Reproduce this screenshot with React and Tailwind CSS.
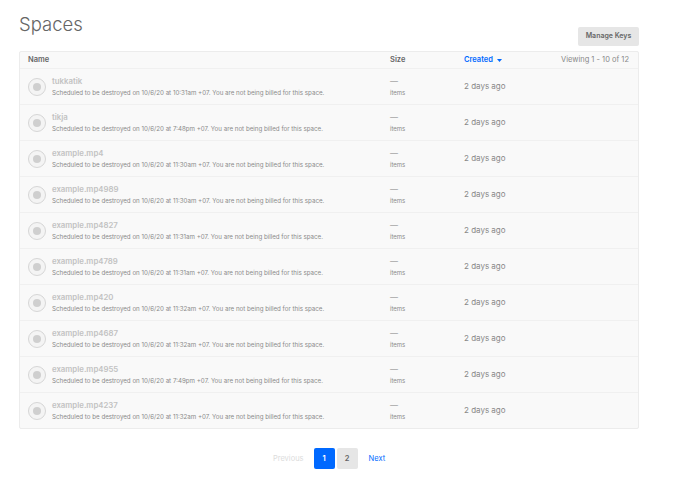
const rows = [
  { name: 'tukkatik', time: '10:31am' },
  { name: 'tikja', time: '7:48pm' },
  { name: 'example.mp4', time: '11:30am' },
  { name: 'example.mp4989', time: '11:30am' },
  { name: 'example.mp4827', time: '11:31am' },
  { name: 'example.mp4789', time: '11:31am' },
  { name: 'example.mp420', time: '11:32am' },
  { name: 'example.mp4687', time: '11:32am' },
  { name: 'example.mp4955', time: '7:49pm' },
  { name: 'example.mp4237', time: '11:32am' },
]

export default function App() {
  return (
    <div className="w-[696px] h-[489px] overflow-hidden bg-white font-['Inter',sans-serif] pl-[19px] pt-[13px]">
      {/* Header */}
      <div className="w-[620px] h-[38px] flex justify-between">
        <h1 className="text-[18.5px] leading-[22px] font-light text-[#666]">Spaces</h1>
        <button className="self-end mb-[5px] w-[61px] h-[19px] bg-[#e6e6e6] rounded-[2px] text-[7px] font-semibold text-[#666]">Manage Keys</button>
      </div>

      {/* Table */}
      <div className="w-[620px] bg-[#f9f9f9] border border-[#ececec] rounded-[2px]">
        <div className="h-[17px] flex items-center pl-[8px] pr-[9px] border-b border-[#f0f0f0] text-[7.5px]">
          <span className="w-[362px] font-semibold text-[#666]">Name</span>
          <span className="w-[74px] font-semibold text-[#666]">Size</span>
          <span className="w-[60px] font-semibold text-[#0069ff] flex items-center gap-[4px]">
            Created
            <svg width="5" height="3" viewBox="0 0 5 3"><path d="M0 0h5L2.5 3z" fill="#0069ff" /></svg>
          </span>
          <span className="flex-1 text-right text-[#888]">Viewing 1 - 10 of 12</span>
        </div>
        {rows.map((row, i) => (
          <div key={row.name} className={`flex items-center pl-[8px] ${i < rows.length - 1 ? 'h-[36px] border-b border-[#f0f0f0]' : 'h-[35px]'}`}>
            <div className="w-[18px] h-[18px] rounded-full border border-[#d6d6d6] bg-[#f4f4f4] flex items-center justify-center">
              <div className="w-[8px] h-[8px] rounded-full bg-[#cfcfcf]" />
            </div>
            <div className="w-[338px] ml-[6px]">
              <div className="text-[7.8px] leading-[11px] font-semibold text-[#c2c2c2]">{row.name}</div>
              <div className="text-[6.2px] leading-[10px] mt-[1px] text-[#8a8a8a]">
                Scheduled to be destroyed on 10/6/20 at {row.time} +07. You are not being billed for this space.
              </div>
            </div>
            <div className="w-[74px]">
              <div className="text-[8px] leading-[11px] text-[#999]">—</div>
              <div className="text-[6px] leading-[10px] mt-[1px] text-[#8a8a8a]">items</div>
            </div>
            <div className="text-[8px] text-[#888] mb-[2px]">2 days ago</div>
          </div>
        ))}
      </div>

      {/* Pagination */}
      <div className="w-[620px] mt-[19px] flex items-center justify-center text-[7.5px]">
        <span className="text-[#dcdcdc] mr-[10px]">Previous</span>
        <span className="w-[21px] h-[21px] rounded-[2px] bg-[#0069ff] text-white font-semibold flex items-center justify-center">1</span>
        <span className="w-[21px] h-[21px] ml-[2px] rounded-[2px] bg-[#e6e6e6] text-[#666] font-semibold flex items-center justify-center">2</span>
        <span className="text-[#0069ff] ml-[11px]">Next</span>
      </div>
    </div>
  )
}
